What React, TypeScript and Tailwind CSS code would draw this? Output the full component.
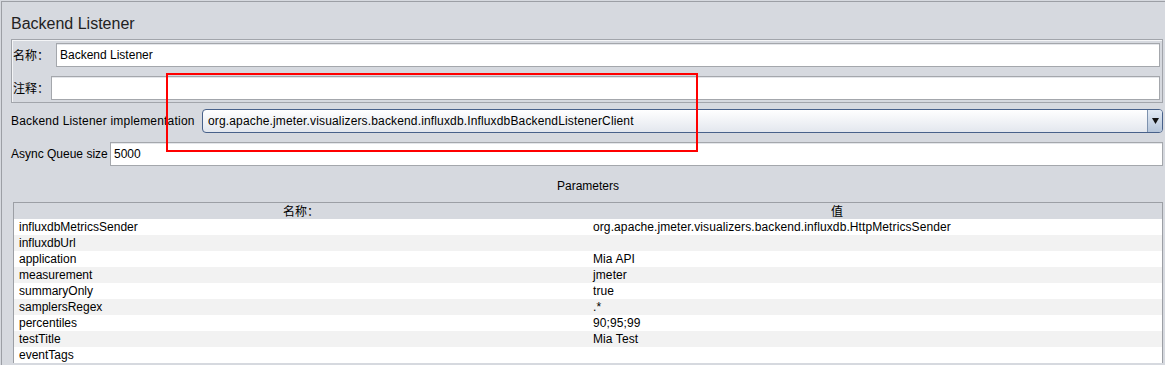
import React from "react";

const rows: [string, string][] = [
  ["influxdbMetricsSender", "org.apache.jmeter.visualizers.backend.influxdb.HttpMetricsSender"],
  ["influxdbUrl", ""],
  ["application", "Mia API"],
  ["measurement", "jmeter"],
  ["summaryOnly", "true"],
  ["samplersRegex", ".*"],
  ["percentiles", "90;95;99"],
  ["testTitle", "Mia Test"],
  ["eventTags", ""],
];

function TextBox({ value, className }: { value?: string; className?: string }) {
  return (
    <div
      className={
        "h-[24px] bg-white border border-[#a4a7ac] shadow-[inset_0_1px_0_#e4e6ea] flex items-center pl-[3px] text-[12px] text-black leading-none " +
        (className ?? "")
      }
    >
      {value}
    </div>
  );
}

export default function App() {
  return (
    <div className="relative w-[1165px] h-[365px] overflow-hidden bg-[#d6d9df] font-['Liberation_Sans','Noto_Sans_CJK_SC',sans-serif] text-black">
      <div className="mt-[1px] ml-[1px] border-t border-l border-[#9c9fa5] h-[364px]">
        {/* Title */}
        <div className="h-[37px] pl-[9px] pt-[11px]">
          <div className="text-[16px] leading-[22px] text-[#222]">Backend Listener</div>
        </div>

        {/* Name / comment box */}
        <div className="ml-[9px] w-[1152px] h-[64px] border border-[#a2a5ab] shadow-[inset_1px_1px_0_#f4f5f7] pt-[3px]">
          <div className="flex items-center h-[24px]">
            <div className="w-[44px] pl-[1px] text-[12px] whitespace-nowrap font-['Noto_Sans_CJK_SC',sans-serif]">名称：</div>
            <TextBox value="Backend Listener" className="flex-1 mr-[2px]" />
          </div>
          <div className="flex items-center h-[24px] mt-[9px]">
            <div className="w-[39px] pl-[1px] text-[12px] whitespace-nowrap font-['Noto_Sans_CJK_SC',sans-serif]">注释：</div>
            <TextBox className="flex-1 mr-[2px]" />
          </div>
        </div>

        {/* Implementation */}
        <div className="flex items-center h-[24px] mt-[6px] pl-[9px] pr-[2px]">
          <div className="w-[191px] text-[12px] tracking-[0.2px] whitespace-nowrap">Backend Listener implementation</div>
          <div className="flex-1 h-[24px] rounded-[4px] border border-[#48618a] bg-gradient-to-b from-white to-[#e3e7ee] flex overflow-hidden">
            <div className="flex-1 flex items-center pl-[5px] text-[12px] tracking-[0.15px] whitespace-nowrap">
              org.apache.jmeter.visualizers.backend.influxdb.InfluxdbBackendListenerClient
            </div>
            <div className="w-[15px] border-l border-[#7d92ae] bg-gradient-to-b from-[#e2eaf4] to-[#b5c5da] flex items-center justify-center">
              <svg width="7" height="6" viewBox="0 0 7 6">
                <path d="M0 0 H7 L3.5 6 Z" fill="#111" />
              </svg>
            </div>
          </div>
        </div>

        {/* Async queue */}
        <div className="flex items-center h-[24px] mt-[9px] pl-[9px] pr-[2px]">
          <div className="w-[99px] text-[12px] whitespace-nowrap">Async Queue size</div>
          <TextBox value="5000" className="flex-1" />
        </div>

        {/* Parameters label */}
        <div className="h-[36px] ml-[11px] w-[1150px] pt-[13px] text-center text-[12px] leading-[14px]">Parameters</div>

        {/* Table */}
        <div className="ml-[11px] w-[1150px] border-t border-l border-r border-[#9c9fa5]">
          <div className="flex h-[16px] text-[12px] leading-[16px] bg-[#d6d9df]">
            <div className="w-[574px] text-center font-['Noto_Sans_CJK_SC',sans-serif]">名称：</div>
            <div className="w-[498px] text-center font-['Noto_Sans_CJK_SC',sans-serif]">值</div>
          </div>
          {rows.map(([k, v], i) => (
            <div
              key={k}
              className={
                "flex h-[16px] text-[12px] leading-[16px] " + (i % 2 === 0 ? "bg-white" : "bg-[#f2f2f2]")
              }
            >
              <div className="w-[574px] pl-[5px] whitespace-nowrap">{k}</div>
              <div className="flex-1 pl-[5px] whitespace-nowrap tracking-[0.1px]">{v}</div>
            </div>
          ))}
        </div>
      </div>

      {/* Red annotation box */}
      <div className="absolute left-[166px] top-[73px] w-[532px] h-[79px] border-2 border-[#ff0000]" />
    </div>
  );
}
